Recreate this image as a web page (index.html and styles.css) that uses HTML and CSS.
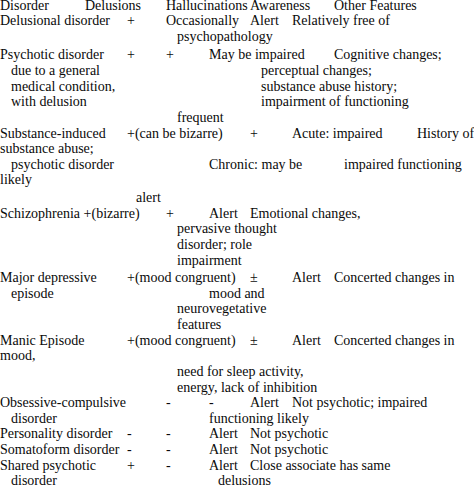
FILE: index.html
```html
<!DOCTYPE html>
<html>
<head>
<meta charset="utf-8">
<link rel="stylesheet" href="styles.css">
</head>
<body>
<div class="page">
  <div class="line"><span class="c1">Disorder</span><span class="c3">Delusions</span><span class="c6">Hallucinations</span><span class="c10">Awareness</span><span class="c13">Other Features</span></div>
  <div class="line"><span class="c1">Delusional disorder</span><span class="c4">+</span><span class="c6">Occasionally</span><span class="c10">Alert</span><span class="c12">Relatively free of</span></div>
  <div class="line"><span class="c7">psychopathology</span></div>
  <div class="line gap3"><span class="c1">Psychotic disorder</span><span class="c4">+</span><span class="c6">+</span><span class="c8">May be impaired</span><span class="c13">Cognitive changes;</span></div>
  <div class="line"><span class="c2">due to a general</span><span class="c11">perceptual changes;</span></div>
  <div class="line"><span class="c2">medical condition,</span><span class="c11">substance abuse history;</span></div>
  <div class="line"><span class="c2">with delusion</span><span class="c11">impairment of functioning</span></div>
  <div class="line"><span class="c7">frequent</span></div>
  <div class="line"><span class="c1">Substance-induced</span><span class="c4">+(can be bizarre)</span><span class="c10">+</span><span class="c12">Acute: impaired</span><span class="c15">History of</span></div>
  <div class="line"><span class="c1">substance abuse;</span></div>
  <div class="line"><span class="c2">psychotic disorder</span><span class="c8">Chronic: may be</span><span class="c14">impaired functioning</span></div>
  <div class="line"><span class="c1">likely</span></div>
  <div class="line gap2"><span class="c5">alert</span></div>
  <div class="line"><span class="c1">Schizophrenia +(bizarre)</span><span class="c6">+</span><span class="c8">Alert</span><span class="c10">Emotional changes,</span></div>
  <div class="line"><span class="c7">pervasive thought</span></div>
  <div class="line"><span class="c7">disorder; role</span></div>
  <div class="line"><span class="c7">impairment</span></div>
  <div class="line gap2"><span class="c1">Major depressive</span><span class="c4">+(mood congruent)</span><span class="c10">±</span><span class="c12">Alert</span><span class="c13">Concerted changes in</span></div>
  <div class="line"><span class="c2">episode</span><span class="c8">mood and</span></div>
  <div class="line"><span class="c7">neurovegetative</span></div>
  <div class="line"><span class="c7">features</span></div>
  <div class="line"><span class="c1">Manic Episode</span><span class="c4">+(mood congruent)</span><span class="c10">±</span><span class="c12">Alert</span><span class="c13">Concerted changes in</span></div>
  <div class="line"><span class="c1">mood,</span></div>
  <div class="line"><span class="c7">need for sleep activity,</span></div>
  <div class="line"><span class="c7">energy, lack of inhibition</span></div>
  <div class="line"><span class="c1">Obsessive-compulsive</span><span class="c6">-</span><span class="c8">-</span><span class="c10">Alert</span><span class="c12">Not psychotic; impaired</span></div>
  <div class="line"><span class="c2">disorder</span><span class="c8">functioning likely</span></div>
  <div class="line"><span class="c1">Personality disorder</span><span class="c4">-</span><span class="c6">-</span><span class="c8">Alert</span><span class="c10">Not psychotic</span></div>
  <div class="line"><span class="c1">Somatoform disorder</span><span class="c4">-</span><span class="c6">-</span><span class="c8">Alert</span><span class="c10">Not psychotic</span></div>
  <div class="line"><span class="c1">Shared psychotic</span><span class="c4">+</span><span class="c6">-</span><span class="c8">Alert</span><span class="c10">Close associate has same</span></div>
  <div class="line"><span class="c2">disorder</span><span class="c9">delusions</span></div>
</div>
</body>
</html>
```
FILE: styles.css
```css
html, body {
  margin: 0;
  padding: 0;
  background: #ffffff;
}

body {
  width: 474px;
  height: 492px;
  overflow: hidden;
  font-family: "Liberation Serif", "Times New Roman", serif;
  font-size: 14px;
  color: #0a0a0a;
}

.page {
  margin-top: -2.5px;
}

.line {
  display: grid;
  grid-template-columns: 11px 74px 42px 9px 30px 11px 32px 9px 32px 11px 31px 42px 10px 73px 1fr;
  height: 15.63px;
  line-height: 15.63px;
  white-space: nowrap;
}

.line span {
  grid-row: 1;
  justify-self: start;
}

.gap2 { margin-top: 2px; }
.gap3 { margin-top: 3px; }

.c1 { grid-column-start: 1; }
.c2 { grid-column-start: 2; }
.c3 { grid-column-start: 3; }
.c4 { grid-column-start: 4; }
.c5 { grid-column-start: 5; }
.c6 { grid-column-start: 6; }
.c7 { grid-column-start: 7; }
.c8 { grid-column-start: 8; }
.c9 { grid-column-start: 9; }
.c10 { grid-column-start: 10; }
.c11 { grid-column-start: 11; }
.c12 { grid-column-start: 12; }
.c13 { grid-column-start: 13; }
.c14 { grid-column-start: 14; }
.c15 { grid-column-start: 15; }
```
